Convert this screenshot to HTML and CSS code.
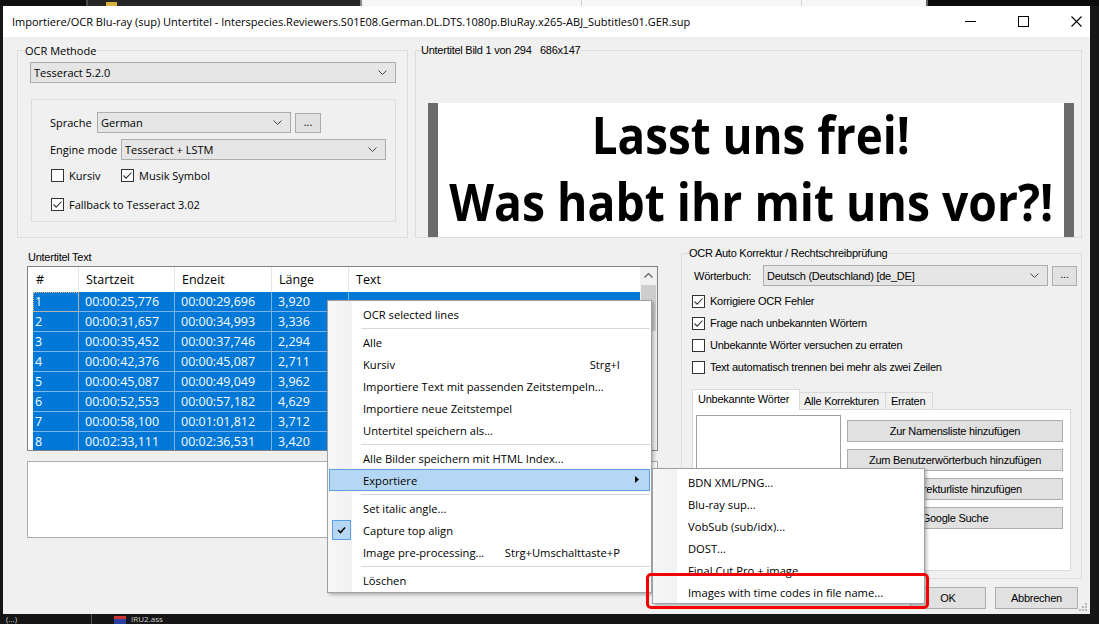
FILE: index.html
```html
<!DOCTYPE html>
<html lang="de">
<head>
<meta charset="utf-8">
<title>Importiere/OCR Blu-ray (sup) Untertitel</title>
<link rel="stylesheet" href="styles.css">
</head>
<body>
<div class="desk-top">
  <div class="dt-a"></div>
  <div class="dt-b"><span class="dt-icon"></span></div>
  <div class="dt-c"><span></span><span></span></div>
  <div class="dt-d"></div>
</div>

<div class="window">
  <div class="titlebar">
    <div class="title">Importiere/OCR Blu-ray (sup) Untertitel - Interspecies.Reviewers.S01E08.German.DL.DTS.1080p.BluRay.x265-ABJ_Subtitles01.GER.sup</div>
    <div class="winctl">
      <span class="wbtn"><svg width="11" height="11" viewBox="0 0 11 11"><line x1="0" y1="5.5" x2="11" y2="5.5" stroke="#000" stroke-width="1"/></svg></span>
      <span class="wbtn"><svg width="11" height="11" viewBox="0 0 11 11"><rect x="0.5" y="0.5" width="10" height="10" fill="none" stroke="#000" stroke-width="1"/></svg></span>
      <span class="wbtn"><svg width="11" height="11" viewBox="0 0 11 11"><path d="M0.5 0.5 L10.5 10.5 M10.5 0.5 L0.5 10.5" stroke="#000" stroke-width="1.1"/></svg></span>
    </div>
  </div>

  <div class="client">
    <div class="row1">
      <div class="group g-ocr">
        <div class="legend seg">OCR Methode</div>
        <div class="combo seg c-method"><span>Tesseract 5.2.0</span><svg class="chev" width="9" height="5" viewBox="0 0 9 5"><polyline points="0.5,0.5 4.5,4.5 8.5,0.5" fill="none" stroke="#444" stroke-width="1"/></svg></div>
        <div class="inner">
          <div class="irow r-sprache">
            <span class="ilabel seg w-sprache">Sprache</span>
            <div class="combo seg c-sprache"><span>German</span><svg class="chev" width="9" height="5" viewBox="0 0 9 5"><polyline points="0.5,0.5 4.5,4.5 8.5,0.5" fill="none" stroke="#444" stroke-width="1"/></svg></div>
            <div class="dots seg">...</div>
          </div>
          <div class="irow r-engine">
            <span class="ilabel seg w-engine">Engine mode</span>
            <div class="combo seg c-engine"><span>Tesseract + LSTM</span><svg class="chev" width="9" height="5" viewBox="0 0 9 5"><polyline points="0.5,0.5 4.5,4.5 8.5,0.5" fill="none" stroke="#444" stroke-width="1"/></svg></div>
          </div>
          <div class="irow r-kursiv">
            <label class="chk seg w-kursiv"><span class="box"></span>Kursiv</label>
            <label class="chk seg"><span class="box on"><svg width="11" height="11" viewBox="0 0 11 11"><polyline points="1.5,5.5 4.2,8.2 9.5,2.5" fill="none" stroke="#333" stroke-width="1.1"/></svg></span>Musik Symbol</label>
          </div>
          <div class="irow r-fallback">
            <label class="chk seg"><span class="box on"><svg width="11" height="11" viewBox="0 0 11 11"><polyline points="1.5,5.5 4.2,8.2 9.5,2.5" fill="none" stroke="#333" stroke-width="1.1"/></svg></span>Fallback to Tesseract 3.02</label>
          </div>
        </div>
      </div>

      <div class="group g-image">
        <div class="legend ms pre l-image">Untertitel Bild 1 von 294   686x147</div>
        <div class="subimg">
          <div class="bar"></div>
          <div class="subimg-text">
            <div class="sl sl1">Lasst uns frei!</div>
            <div class="sl sl2">Was habt ihr mit uns vor?!</div>
          </div>
          <div class="bar"></div>
        </div>
      </div>
    </div>

    <div class="row2">
      <div class="leftcol">
        <div class="ms lbl">Untertitel Text</div>
        <div class="lv">
          <div class="lv-main">
            <div class="lv-head seg">
              <div class="hc c1">#</div>
              <div class="hc c2">Startzeit</div>
              <div class="hc c3">Endzeit</div>
              <div class="hc c4">Länge</div>
              <div class="hc c5">Text</div>
            </div>
            <div class="lv-row seg"><div class="rc r1 focus">1</div><div class="rc c2">00:00:25,776</div><div class="rc c3">00:00:29,696</div><div class="rc c4">3,920</div><div class="rc c5"></div></div>
            <div class="lv-row seg"><div class="rc r1">2</div><div class="rc c2">00:00:31,657</div><div class="rc c3">00:00:34,993</div><div class="rc c4">3,336</div><div class="rc c5"></div></div>
            <div class="lv-row seg"><div class="rc r1">3</div><div class="rc c2">00:00:35,452</div><div class="rc c3">00:00:37,746</div><div class="rc c4">2,294</div><div class="rc c5"></div></div>
            <div class="lv-row seg"><div class="rc r1">4</div><div class="rc c2">00:00:42,376</div><div class="rc c3">00:00:45,087</div><div class="rc c4">2,711</div><div class="rc c5"></div></div>
            <div class="lv-row seg"><div class="rc r1">5</div><div class="rc c2">00:00:45,087</div><div class="rc c3">00:00:49,049</div><div class="rc c4">3,962</div><div class="rc c5"></div></div>
            <div class="lv-row seg"><div class="rc r1">6</div><div class="rc c2">00:00:52,553</div><div class="rc c3">00:00:57,182</div><div class="rc c4">4,629</div><div class="rc c5"></div></div>
            <div class="lv-row seg"><div class="rc r1">7</div><div class="rc c2">00:00:58,100</div><div class="rc c3">00:01:01,812</div><div class="rc c4">3,712</div><div class="rc c5"></div></div>
            <div class="lv-row seg"><div class="rc r1">8</div><div class="rc c2">00:02:33,111</div><div class="rc c3">00:02:36,531</div><div class="rc c4">3,420</div><div class="rc c5"></div></div>
          </div>
          <div class="lv-scroll">
            <div class="sb-btn"><svg width="9" height="5" viewBox="0 0 9 5"><polyline points="0.5,4.5 4.5,0.5 8.5,4.5" fill="none" stroke="#606060" stroke-width="1.2"/></svg></div>
            <div class="sb-thumb"></div>
          </div>
        </div>
        <div class="textbox"></div>
      </div>

      <div class="group g-korr">
        <div class="legend ms">OCR Auto Korrektur / Rechtschreibprüfung</div>
        <div class="krow">
          <span class="ms w-wb">Wörterbuch:</span>
          <div class="combo ms c-wb"><span>Deutsch (Deutschland) [de_DE]</span><svg class="chev" width="9" height="5" viewBox="0 0 9 5"><polyline points="0.5,0.5 4.5,4.5 8.5,0.5" fill="none" stroke="#444" stroke-width="1"/></svg></div>
          <div class="dots ms d-wb">...</div>
        </div>
        <div class="kchecks">
          <label class="chk kchk ms"><span class="box on"><svg width="11" height="11" viewBox="0 0 11 11"><polyline points="1.5,5.5 4.2,8.2 9.5,2.5" fill="none" stroke="#333" stroke-width="1.1"/></svg></span>Korrigiere OCR Fehler</label>
          <label class="chk kchk ms"><span class="box on"><svg width="11" height="11" viewBox="0 0 11 11"><polyline points="1.5,5.5 4.2,8.2 9.5,2.5" fill="none" stroke="#333" stroke-width="1.1"/></svg></span>Frage nach unbekannten Wörtern</label>
          <label class="chk kchk ms"><span class="box"></span>Unbekannte Wörter versuchen zu erraten</label>
          <label class="chk kchk ms"><span class="box"></span>Text automatisch trennen bei mehr als zwei Zeilen</label>
        </div>
        <div class="tabs ms">
          <div class="tab active">Unbekannte Wörter</div>
          <div class="tab t2">Alle Korrekturen</div>
          <div class="tab t3">Erraten</div>
        </div>
        <div class="tabpanel">
          <div class="listbox"></div>
          <div class="tbtns ms">
            <div class="btn tb">Zur Namensliste hinzufügen</div>
            <div class="btn tb">Zum Benutzerwörterbuch hinzufügen</div>
            <div class="btn tb">Zur Korrekturliste hinzufügen</div>
            <div class="btn tb">Google Suche</div>
          </div>
        </div>
      </div>
    </div>

    <div class="footer ms">
      <div class="btn b-ok">OK</div>
      <div class="btn b-cancel">Abbrechen</div>
    </div>
  </div>
  <svg class="grip" width="10" height="10" viewBox="0 0 10 10" fill="#b8b8b8"><rect x="7" y="1" width="2" height="2"/><rect x="4" y="4" width="2" height="2"/><rect x="7" y="4" width="2" height="2"/><rect x="1" y="7" width="2" height="2"/><rect x="4" y="7" width="2" height="2"/><rect x="7" y="7" width="2" height="2"/></svg>
</div>

<div class="menu ctx seg">
  <div class="mi"><span class="mt">OCR selected lines</span></div>
  <div class="msep"></div>
  <div class="mi"><span class="mt">Alle</span></div>
  <div class="mi"><span class="mt">Kursiv</span><span class="ms-key">Strg+I</span></div>
  <div class="mi"><span class="mt">Importiere Text mit passenden Zeitstempeln...</span></div>
  <div class="mi"><span class="mt">Importiere neue Zeitstempel</span></div>
  <div class="mi"><span class="mt">Untertitel speichern als...</span></div>
  <div class="msep"></div>
  <div class="mi"><span class="mt">Alle Bilder speichern mit HTML Index...</span></div>
  <div class="mi hot"><span class="mt">Exportiere</span><svg class="sub-arrow" width="4" height="7" viewBox="0 0 4 7"><polygon points="0,0 4,3.5 0,7" fill="#000"/></svg></div>
  <div class="msep"></div>
  <div class="mi"><span class="mt">Set italic angle...</span></div>
  <div class="mi"><span class="mcheck"><svg width="9" height="8" viewBox="0 0 9 8"><polyline points="1,4 3.5,6.5 8,1.5" fill="none" stroke="#000" stroke-width="1.6"/></svg></span><span class="mt">Capture top align</span></div>
  <div class="mi"><span class="mt">Image pre-processing...</span><span class="ms-key">Strg+Umschalttaste+P</span></div>
  <div class="msep"></div>
  <div class="mi"><span class="mt">Löschen</span></div>
</div>

<div class="menu submenu seg">
  <div class="mi"><span class="mt">BDN XML/PNG...</span></div>
  <div class="mi"><span class="mt">Blu-ray sup...</span></div>
  <div class="mi"><span class="mt">VobSub (sub/idx)...</span></div>
  <div class="mi"><span class="mt">DOST...</span></div>
  <div class="mi"><span class="mt">Final Cut Pro + image...</span></div>
  <div class="mi"><span class="mt">Images with time codes in file name...</span></div>
</div>

<div class="redbox"></div>

<div class="taskfrag seg">
  <span class="tf1">(...)</span>
  <span class="tf-line"></span>
  <span class="tf-icon"></span>
  <span class="tf2">IRU2.ass</span>
</div>
</body>
</html>
```

FILE: styles.css
```css
* { box-sizing: border-box; }
html, body { margin: 0; padding: 0; }
body {
  width: 1099px;
  height: 624px;
  overflow: hidden;
  position: relative;
  background: #161616;
  font-family: "Open Sans", "Noto Sans", sans-serif;
  font-size: 11px;
  color: #000;
}

.seg { font-family: "Open Sans", "Noto Sans", sans-serif; font-size: 11px; }
.ms { font-family: "Liberation Sans", Arial, sans-serif; font-size: 11px; letter-spacing: -0.25px; }
.pre { white-space: pre; }

/* desktop strip behind the window */
.desk-top { display: flex; height: 6px; }
.dt-a { width: 88px; background: #0f0f0f; border-right: 2px solid #4a4a4a; }
.dt-b { width: 272px; background: #262626; }
.dt-icon { display: block; width: 11px; height: 4px; margin: 2px 0 0 18px; background: #d9b13a; }
.dt-c { width: 566px; background: #f6f6f6; border-left: 2px solid #8a8a8a; display: flex; }
.dt-c span { width: 220px; border-right: 1px solid #cfcfcf; }
.dt-d { flex: 1; background: #0c0c0c; border-left: 2px solid #666; }

/* window */
.window {
  position: absolute;
  left: 3px;
  top: 6px;
  width: 1087px;
  height: 608px;
  background: #f0f0f0;
  display: flex;
  flex-direction: column;
}
.titlebar {
  height: 31px;
  background: #fff;
  display: flex;
  align-items: center;
  padding-left: 9px;
  flex: none;
}
.title { flex: 1; white-space: nowrap; font-size: 11px; color: #000; }
.winctl { display: flex; gap: 22px; margin-right: -2px; }
.wbtn { width: 31px; height: 31px; display: flex; align-items: center; justify-content: center; }

.client {
  flex: 1;
  display: flex;
  flex-direction: column;
  padding: 0 8px 0 14px;
}

/* group boxes */
.group { border: 1px solid #dcdcdc; flex: none; }
.legend {
  width: max-content;
  margin: -8px 0 0 6px;
  padding: 0 1px;
  background: #f0f0f0;
  line-height: 15px;
  height: 15px;
}
.l-image { margin-left: 4px; }

.row1 { display: flex; gap: 7px; margin-top: 13px; height: 188px; }
.g-ocr { width: 391px; height: 188px; }
.g-image { width: 667px; height: 188px; }

.combo {
  display: flex;
  align-items: center;
  justify-content: space-between;
  height: 21px;
  background: #e5e5e5;
  border: 1px solid #acacac;
  padding: 0 8px 0 3px;
}
.chev { flex: none; }
.c-method { margin: 4px 0 0 12px; width: 366px; }

.inner {
  margin: 16px 0 0 13px;
  width: 365px;
  height: 123px;
  border: 1px solid #dcdcdc;
}
.irow { display: flex; align-items: center; margin-left: 18px; }
.r-sprache { margin-top: 12px; }
.r-engine { margin-top: 6px; }
.r-kursiv { margin-top: 8px; margin-left: 19px; }
.r-fallback { margin-top: 14px; margin-left: 19px; }
.ilabel { display: block; }
.w-sprache { width: 47px; }
.w-engine { width: 71px; }
.c-sprache { width: 194px; }
.c-engine { width: 265px; }
.dots {
  width: 26px;
  height: 20px;
  margin-left: 4px;
  background: #e1e1e1;
  border: 1px solid #adadad;
  display: flex;
  align-items: center;
  justify-content: center;
  line-height: 1;
  padding-bottom: 3px;
}

.chk { display: flex; align-items: center; gap: 5px; white-space: nowrap; }
.w-kursiv { width: 70px; }
.box {
  width: 13px;
  height: 13px;
  border: 1px solid #333;
  background: #fff;
  display: flex;
  align-items: center;
  justify-content: center;
  flex: none;
}

/* subtitle image */
.subimg {
  display: flex;
  margin: 45px 0 0 12px;
  width: 646px;
  height: 134px;
}
.bar { width: 10px; background: #6b6b6b; flex: none; }
.subimg-text {
  flex: none;
  width: 626px;
  min-width: 0;
  background: #fff;
  display: flex;
  flex-direction: column;
  align-items: center;
  font-family: "Open Sans", "Noto Sans", sans-serif;
  font-weight: 700;
  font-size: 52px;
  line-height: 66px;
  color: #000;
}
.sl { width: max-content; white-space: nowrap; flex: none; }
.sl1 { transform: scaleX(0.88); margin-top: -2px; }
.sl2 { transform: scaleX(0.89); margin-top: 1px; }

/* row 2 */
.row2 { display: flex; align-items: flex-start; }
.leftcol { margin: 12px 0 0 10px; width: 631px; }
.lbl { line-height: 14px; height: 14px; padding-left: 1px; }
.lv {
  margin-top: 2px;
  height: 185px;
  border: 1px solid #828282;
  background: #fff;
  display: flex;
  overflow: hidden;
}
.lv-main { flex: 1; overflow: hidden; }
.lv-head { display: flex; height: 25px; align-items: stretch; font-size: 12.5px; }
.hc { border-right: 1px solid #e5e5e5; padding-left: 7px; display: flex; align-items: center; }
.hc.c1 { width: 51px; padding-left: 8px; }
.c2 { width: 96px; }
.c3 { width: 97px; }
.c4 { width: 77px; }
.c5 { flex: 1; border-right: none; }
.lv-row {
  display: flex;
  height: 20px;
  margin-left: 5px;
  font-size: 12.5px;
  color: #fff;
}
.rc {
  background: #0078d7;
  border-right: 1px solid #7cb4e8;
  border-bottom: 1px solid #7cb4e8;
  padding-left: 6px;
  line-height: 19px;
  white-space: nowrap;
}
.rc.r1 { width: 46px; padding-left: 2px; }
.rc.c5 { border-right: none; }
.rc.focus { outline: 1px dotted #f3b27a; outline-offset: -1px; }
.lv-scroll { width: 17px; background: #f0f0f0; flex: none; }
.sb-btn { height: 17px; display: flex; align-items: center; justify-content: center; }
.sb-thumb { margin: 1px 1px 0; height: 46px; background: #cdcdcd; }
.textbox {
  margin-top: 10px;
  height: 77px;
  border: 1px solid #ababab;
  background: #fff;
}

.g-korr { margin: 15px 0 0 23px; width: 401px; height: 326px; }
.krow { display: flex; align-items: center; margin: 4px 0 0 12px; }
.w-wb { width: 69px; }
.c-wb { width: 285px; }
.d-wb { width: 25px; }
.kchecks { margin: 4px 0 0 10px; display: flex; flex-direction: column; }
.kchk { height: 22px; }
.tabs { display: flex; align-items: flex-end; margin: 11px 0 0 10px; height: 20px; position: relative; z-index: 1; }
.tab {
  height: 17px;
  border: 1px solid #d9d9d9;
  border-bottom: none;
  background: #f0f0f0;
  padding: 0 5px;
  display: flex;
  align-items: center;
  white-space: nowrap;
  flex: none;
}
.tab.active { height: 21px; background: #fff; width: 108px; padding: 0 5px 3px; margin-bottom: -1px; }
.tab.t2 { width: 86px; border-left: none; padding: 0 4px; }
.tab.t3 { width: 47px; border-left: none; }
.tabpanel {
  margin: 0 0 0 10px;
  width: 379px;
  height: 162px;
  background: #fff;
  border: 1px solid #d9d9d9;
  display: flex;
  align-items: flex-start;
}
.listbox { margin: 5px 0 0 3px; width: 145px; height: 150px; border: 1px solid #a0a0a0; background: #fff; }
.tbtns { margin: 10px 0 0 6px; display: flex; flex-direction: column; gap: 7px; }
.btn {
  height: 22px;
  background: #e1e1e1;
  border: 1px solid #adadad;
  display: flex;
  align-items: center;
  justify-content: center;
  white-space: nowrap;
}
.tb { width: 216px; }

.footer { display: flex; justify-content: flex-end; gap: 9px; margin: 8px 4px 0 0; }
.b-ok { width: 76px; }
.b-cancel { width: 83px; }

.grip { position: absolute; right: 2px; bottom: 2px; }

/* menus */
.menu {
  position: absolute;
  background: #fff linear-gradient(to right, #f7f7f7 0, #f1f1f1 24px, #fff 24px);
  border: 1px solid #a0a0a0;
  box-shadow: 2px 2px 3px rgba(0,0,0,0.25);
  padding: 2px 1px 1px 1px;
  font-size: 11.2px;
}
.ctx { left: 327px; top: 300px; width: 325px; height: 293px; }
.submenu { left: 652px; top: 468px; width: 273px; height: 136px; }
.mi { height: 22px; display: flex; align-items: center; position: relative; padding-left: 34px; padding-right: 30px; }
.mt { flex: 1; white-space: nowrap; }
.ms-key { white-space: nowrap; }
.msep { height: 6px; margin-left: 32px; display: flex; align-items: center; }
.msep::before { content: ""; display: block; height: 1px; width: 100%; background: #d7d7d7; }
.mi.hot { background: #b5d7f3; outline: 1px solid #5ba0e4; outline-offset: -1px; }
.sub-arrow { position: absolute; right: 11px; top: 7px; }
.mcheck {
  position: absolute;
  left: 3px;
  top: 1px;
  width: 19px;
  height: 20px;
  background: #b5d7f3;
  border: 1px solid #5ba0e4;
  display: flex;
  align-items: center;
  justify-content: center;
}

.redbox {
  position: absolute;
  left: 646px;
  top: 573px;
  width: 283px;
  height: 36px;
  border: 3px solid #f50000;
  border-radius: 5px;
}

.taskfrag {
  position: absolute;
  left: 0;
  top: 614px;
  width: 300px;
  height: 10px;
  color: #cfcfcf;
  font-size: 8px;
  line-height: 10px;
}
.tf1 { position: absolute; left: 6px; top: 0; }
.tf-line { position: absolute; left: 91px; top: 0; width: 1px; height: 10px; background: #555; }
.tf-icon { position: absolute; left: 114px; top: 2px; width: 12px; height: 8px; background: #2a3f9e; border-top: 3px solid #c33; }
.tf2 { position: absolute; left: 131px; top: 0; }
```
